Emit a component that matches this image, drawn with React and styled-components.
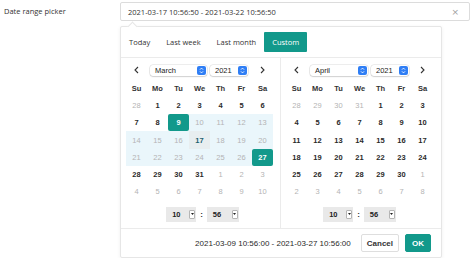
import React from 'react';
import styled, { createGlobalStyle } from 'styled-components';

const TEAL = '#12998b';

const Global = createGlobalStyle`
  html, body { margin: 0; padding: 0; background: #fff; }
  body { font-family: "Open Sans", sans-serif; }
`;

const Page = styled.div`
  display: flex;
  align-items: flex-start;
  padding-top: 2px;
`;

const Label = styled.div`
  width: 116px;
  padding-left: 4px;
  height: 19px;
  line-height: 19px;
  font-size: 7.5px;
  color: #333;
`;

const Field = styled.div`
  display: flex;
  flex-direction: column;
`;

const Input = styled.div`
  box-sizing: border-box;
  width: 350px;
  height: 19px;
  border: 1px solid #dcdcdc;
  border-radius: 2px;
  display: flex;
  align-items: center;
  justify-content: space-between;
  padding: 0 8px 0 7px;
  font-size: 7.5px;
  color: #333;
`;

const Clear = styled.span`
  color: #a0a0a0;
  font-size: 9px;
  font-family: "DejaVu Sans", sans-serif;
  margin-right: 2px;
`;

const Popup = styled.div`
  position: relative;
  box-sizing: border-box;
  margin-top: 5px;
  width: 322px;
  border: 1px solid #e6e6e6;
  border-radius: 2px;
  background: #fff;
  box-shadow: 0 1px 4px rgba(0, 0, 0, 0.06);
`;

const Arrow = styled.div`
  position: absolute;
  top: -4px;
  left: 8px;
  width: 6px;
  height: 6px;
  background: #fff;
  border-top: 1px solid #e6e6e6;
  border-left: 1px solid #e6e6e6;
  transform: rotate(45deg);
`;

const Tabs = styled.div`
  display: flex;
  align-items: center;
  height: 30px;
  border-bottom: 1px solid #ebebeb;
`;

const Tab = styled.div`
  height: 20px;
  line-height: 20px;
  padding: 0 8px;
  font-size: 7.5px;
  border-radius: 1px;
  color: ${p => (p.$active ? '#fff' : '#333')};
  background: ${p => (p.$active ? TEAL : 'transparent')};
`;

const Calendars = styled.div`
  display: flex;
  border-bottom: 1px solid #ebebeb;
`;

const Calendar = styled.div`
  box-sizing: border-box;
  width: 160px;
  height: 170px;
  padding: 5px 6px 0 5px;
  border-right: ${p => (p.$divider ? '1px solid #ebebeb' : 'none')};
  font-family: "Liberation Sans", Arial, sans-serif;
`;

const Nav = styled.div`
  display: flex;
  align-items: center;
  height: 14px;
  width: 147px;
`;

const NavArrow = styled.div`
  width: 21px;
  display: flex;
  justify-content: center;
  align-items: center;
  margin-left: ${p => (p.$right ? 'auto' : '0')};
`;

const Select = styled.div`
  box-sizing: border-box;
  width: ${p => p.$w}px;
  height: 11px;
  margin-left: 3px;
  display: flex;
  align-items: center;
  justify-content: space-between;
  padding: 0 1px 0 5px;
  background: #fff;
  border-radius: 3px;
  box-shadow: 0 0 0 0.5px rgba(0, 0, 0, 0.14), 0 1px 1.5px rgba(0, 0, 0, 0.12);
  font-size: 7.5px;
  color: #222;
`;

const Stepper = styled.div`
  width: 9px;
  height: 9px;
  border-radius: 2px;
  background: #2f7ef5;
  display: flex;
  align-items: center;
  justify-content: center;
`;

const Grid = styled.div`
  display: grid;
  grid-template-columns: repeat(7, 21px);
  grid-auto-rows: 17.3px;
  margin-top: 2.5px;
`;

const Head = styled.div`
  display: flex;
  align-items: center;
  justify-content: center;
  font-size: 7.5px;
  font-weight: 700;
  color: #333;
`;

const Day = styled.div`
  display: flex;
  align-items: center;
  justify-content: center;
  font-size: 7.5px;
  font-weight: ${p => (p.$kind === 'normal' || p.$kind === 'sel' || p.$kind === 'today' ? 700 : 400)};
  color: ${p =>
    p.$kind === 'sel' ? '#fff' :
    p.$kind === 'today' ? '#1d5f70' :
    p.$kind === 'normal' ? '#2a2a2a' : '#b4b4b4'};
  background: ${p =>
    p.$kind === 'sel' ? TEAL :
    p.$kind === 'today' ? '#e8eef0' :
    p.$kind === 'range' ? '#eaf6fb' : 'transparent'};
  border-radius: ${p => (p.$kind === 'sel' ? '2px' : '0')};
`;

const TimeRow = styled.div`
  display: flex;
  justify-content: center;
  align-items: center;
  width: 147px;
  margin-top: 6px;
  padding-left: ${p => p.$shift}px;
  box-sizing: border-box;
  height: 15px;
`;

const TimeBox = styled.div`
  box-sizing: border-box;
  width: ${p => p.$w}px;
  height: 15px;
  background: #e9e9e9;
  display: flex;
  align-items: center;
  justify-content: space-between;
  padding: 0 1px 0 6px;
  font-size: 7.5px;
  font-weight: 700;
  color: #222;
`;

const TimeBtn = styled.div`
  box-sizing: border-box;
  width: 6px;
  height: 9px;
  background: #fff;
  border: 1px solid #b5b5b5;
  border-radius: 1px;
  display: flex;
  align-items: center;
  justify-content: center;
`;

const Colon = styled.span`
  margin: 0 4px;
  font-size: 8px;
  font-weight: 700;
  color: #333;
`;

const Footer = styled.div`
  display: flex;
  align-items: center;
  justify-content: flex-end;
  height: 28px;
  padding-right: 10px;
  font-family: "Liberation Sans", Arial, sans-serif;
`;

const Summary = styled.span`
  font-size: 8px;
  color: #2a2a2a;
`;

const Button = styled.div`
  box-sizing: border-box;
  height: 18px;
  padding: 0 ${p => (p.$primary ? 6 : 5)}px;
  margin-left: ${p => (p.$primary ? 6 : 10)}px;
  display: flex;
  align-items: center;
  font-size: 8px;
  font-weight: 700;
  border-radius: 2px;
  color: ${p => (p.$primary ? '#fff' : '#333')};
  background: ${p => (p.$primary ? TEAL : '#fff')};
  border: 1px solid ${p => (p.$primary ? TEAL : '#dedede')};
`;

const Chevron = ({ dir }) => (
  <svg width="5" height="8" viewBox="0 0 5 8">
    <path
      d={dir === 'left' ? 'M4 1 L1 4 L4 7' : 'M1 1 L4 4 L1 7'}
      fill="none"
      stroke="#333"
      strokeWidth="1.1"
    />
  </svg>
);

const StepIcon = () => (
  <svg width="5" height="7" viewBox="0 0 5 7">
    <path d="M1 2.6 L2.5 1.1 L4 2.6 M1 4.4 L2.5 5.9 L4 4.4" fill="none" stroke="#fff" strokeWidth="0.9" />
  </svg>
);

const DownTri = () => (
  <svg width="3" height="2" viewBox="0 0 3 2">
    <path d="M0 0 L3 0 L1.5 2 Z" fill="#222" />
  </svg>
);

const HEADS = ['Su', 'Mo', 'Tu', 'We', 'Th', 'Fr', 'Sa'];

const march = (() => {
  const cells = [{ n: 28, k: 'muted' }];
  for (let d = 1; d <= 31; d++) {
    let k = 'normal';
    if (d === 9 || d === 27) k = 'sel';
    else if (d === 17) k = 'today';
    else if (d > 9 && d < 27) k = 'range';
    cells.push({ n: d, k });
  }
  for (let d = 1; d <= 10; d++) cells.push({ n: d, k: 'muted' });
  return cells;
})();

const april = (() => {
  const cells = [28, 29, 30, 31].map(n => ({ n, k: 'muted' }));
  for (let d = 1; d <= 30; d++) cells.push({ n: d, k: 'normal' });
  for (let d = 1; d <= 8; d++) cells.push({ n: d, k: 'muted' });
  return cells;
})();

const Month = ({ month, monthW, days, divider, shift }) => (
  <Calendar $divider={divider}>
    <Nav>
      <NavArrow><Chevron dir="left" /></NavArrow>
      <Select $w={monthW}>
        <span>{month}</span>
        <Stepper><StepIcon /></Stepper>
      </Select>
      <Select $w={38}>
        <span>2021</span>
        <Stepper><StepIcon /></Stepper>
      </Select>
      <NavArrow $right><Chevron dir="right" /></NavArrow>
    </Nav>
    <Grid>
      {HEADS.map(h => <Head key={h}>{h}</Head>)}
      {days.map((d, i) => (
        <Day key={i} $kind={d.k}>{d.n}</Day>
      ))}
    </Grid>
    <TimeRow $shift={shift}>
      <TimeBox $w={30}>
        <span>10</span>
        <TimeBtn><DownTri /></TimeBtn>
      </TimeBox>
      <Colon>:</Colon>
      <TimeBox $w={32}>
        <span>56</span>
        <TimeBtn><DownTri /></TimeBtn>
      </TimeBox>
    </TimeRow>
  </Calendar>
);

export default function App() {
  return (
    <>
      <Global />
      <Page>
        <Label>Date range picker</Label>
        <Field>
          <Input>
            <span>2021-03-17 10:56:50 - 2021-03-22 10:56:50</span>
            <Clear>×</Clear>
          </Input>
          <Popup>
            <Arrow />
            <Tabs>
              <Tab>Today</Tab>
              <Tab>Last week</Tab>
              <Tab>Last month</Tab>
              <Tab $active>Custom</Tab>
            </Tabs>
            <Calendars>
              <Month month="March" monthW={57} days={march} divider shift={6} />
              <Month month="April" monthW={58} days={april} shift={0} />
            </Calendars>
            <Footer>
              <Summary>2021-03-09 10:56:00 - 2021-03-27 10:56:00</Summary>
              <Button>Cancel</Button>
              <Button $primary>OK</Button>
            </Footer>
          </Popup>
        </Field>
      </Page>
    </>
  );
}
